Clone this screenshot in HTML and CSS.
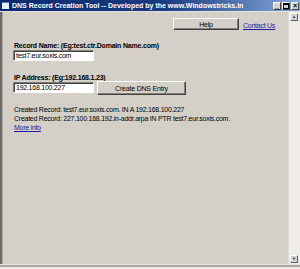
FILE: index.html
```html
<!DOCTYPE html>
<html>
<head>
<meta charset="utf-8">
<link rel="stylesheet" href="styles.css">
</head>
<body>
<div class="window">
  <div class="titlebar">
    <div class="appicon"></div>
    <span class="title">DNS Record Creation Tool -- Developed by the www.Windowstricks.in</span>
    <div class="controls">
      <span class="ctl">_</span><span class="ctl"><span class="maxbox"></span></span><span class="ctl">×</span>
    </div>
  </div>
  <div class="main">
    <div class="leftedge"></div>
    <div class="content">
      <div class="toprow">
        <button class="btn help">Help</button>
        <a class="link" href="#">Contact Us</a>
      </div>
      <div class="label l1">Record Name: (Eg:test.ctr.Domain Name.com)</div>
      <div class="field">test7.eur.soxis.com</div>
      <div class="label l2">IP Address: (Eg:192.168.1.23)</div>
      <div class="iprow">
        <div class="field">192.168.100.227</div>
        <button class="btn create">Create DNS Entry</button>
      </div>
      <div class="results">
        <div>Created Record: test7.eur.soxis.com. IN A 192.168.100.227</div>
        <div>Created Record: 227.100.168.192.in-addr.arpa IN PTR test7.eur.soxis.com.</div>
        <a class="link" href="#">More info</a>
      </div>
    </div>
    <div class="scrollbar">
      <div class="arrow">▲</div>
      <div class="track"></div>
      <div class="arrow">▼</div>
    </div>
  </div>
  <div class="bottom"></div>
</div>
</body>
</html>
```
FILE: styles.css
```css
html, body {
  margin: 0;
  padding: 0;
  width: 300px;
  height: 269px;
  overflow: hidden;
  background: #f2f1ef;
  font-family: "Liberation Sans", Arial, sans-serif;
}
.window {
  width: 300px;
  height: 269px;
  display: flex;
  flex-direction: column;
}
.titlebar {
  height: 11px;
  flex: 0 0 11px;
  background: linear-gradient(to right, #0c2a6e 0%, #1a3b82 55%, #86aadb 100%);
  display: flex;
  align-items: center;
  color: #fff;
  border-bottom: 1px solid #e4e2de;
}
.appicon {
  width: 7px;
  height: 6px;
  margin-left: 2px;
  margin-right: 3px;
  background: #e8eef8;
  border-top: 1px solid #5a7fc0;
}
.title {
  font-weight: bold;
  font-size: 7px;
  white-space: nowrap;
}
.controls {
  margin-left: auto;
  margin-right: 1px;
  display: flex;
  gap: 1px;
}
.ctl {
  width: 8px;
  height: 8px;
  background: #d6d3ce;
  border: 1px solid;
  border-color: #fff #404040 #404040 #fff;
  box-sizing: border-box;
  color: #000;
  font-size: 7px;
  line-height: 6px;
  text-align: center;
  font-weight: bold;
  display: flex;
  align-items: center;
  justify-content: center;
}
.maxbox {
  width: 4px;
  height: 3px;
  border: 1px solid #000;
  border-top-width: 2px;
}
.main {
  flex: 1;
  display: flex;
  min-height: 0;
}
.leftedge {
  width: 2px;
  background: #6e6a66;
  border-right: 1px solid #a8a5a0;
}
.content {
  flex: 1;
  background: #d4d0c8;
  font-size: 7px;
  letter-spacing: -0.25px;
  color: #000;
  padding-left: 10px;
  padding-top: 5px;
}
.toprow {
  display: flex;
  align-items: flex-end;
  padding-left: 160px;
  height: 13px;
}
.btn {
  font-family: "Liberation Sans", Arial, sans-serif;
  font-size: 7px;
  letter-spacing: -0.2px;
  background: #d4d0c8;
  border: 1px solid;
  border-color: #fff #404040 #404040 #fff;
  box-shadow: inset -1px -1px 0 #808080;
  padding: 0;
  color: #000;
  margin: 0;
}
.help {
  width: 66px;
  height: 12px;
}
.link {
  color: #1a1aa6;
  text-decoration: underline;
  font-size: 7px;
}
.toprow .link {
  margin-left: 4px;
  margin-bottom: 1px;
}
.label {
  font-weight: bold;
  font-size: 7px;
  letter-spacing: -0.2px;
  line-height: 9px;
}
.l1 {
  margin-top: 11px;
  padding-left: 1px;
}
.l2 {
  margin-top: 12px;
  padding-left: 1px;
}
.field {
  width: 81px;
  height: 11px;
  box-sizing: border-box;
  background: #fff;
  border: 1px solid;
  border-color: #808080 #fff #fff #808080;
  box-shadow: inset 1px 1px 0 #404040;
  font-size: 7px;
  line-height: 9px;
  padding-left: 2px;
  margin-top: 0;
}
.iprow {
  display: flex;
  align-items: flex-start;
  gap: 3px;
}
.create {
  width: 89px;
  height: 14px;
  margin-top: -1px;
}
.results {
  margin-top: 10px;
  padding-left: 1px;
  line-height: 9px;
  white-space: nowrap;
}
.results .link {
  display: block;
}
.scrollbar {
  width: 11px;
  background: #eeece8;
  display: flex;
  flex-direction: column;
  border-left: 1px solid #e0ddd8;
}
.arrow {
  width: 8px;
  height: 8px;
  margin: 1px 0 0 1px;
  background: #d6d3ce;
  border: 1px solid;
  border-color: #fff #606060 #606060 #fff;
  box-sizing: border-box;
  font-size: 4px;
  line-height: 6px;
  text-align: center;
  color: #222;
}
.track { flex: 1; }
.arrow:last-child { margin-bottom: 1px; }
.bottom {
  height: 5px;
  flex: 0 0 5px;
  background: linear-gradient(#e6e4e0 0 1px, #a9a6a2 1px 3px, #eeede9 3px);
}
```
